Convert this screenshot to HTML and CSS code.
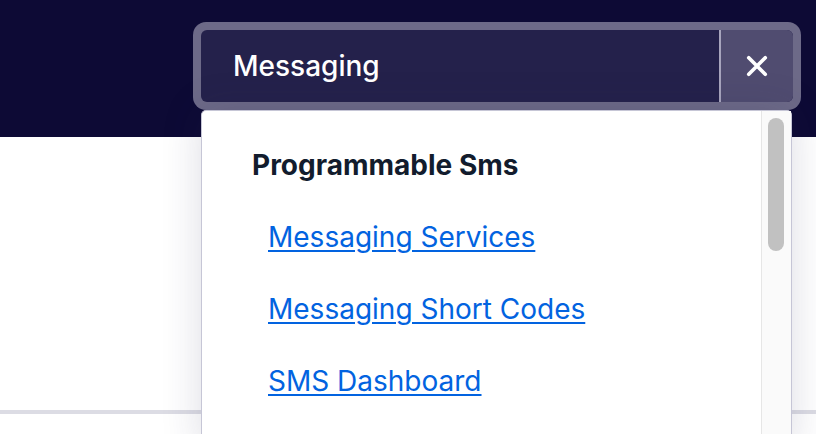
FILE: index.html
```html
<!DOCTYPE html>
<html lang="en">
  <head>
    <meta charset="UTF-8" />
    <meta name="viewport" content="width=device-width, initial-scale=1.0" />
    <title>Search</title>
    <link rel="stylesheet" href="styles.css">
  </head>
  <body>
    <div class="header">
      <div class="search">
        <div class="field">
          <input class="query" type="text" value="Messaging" />
          <button class="clear" aria-label="Clear">
            <svg width="24" height="24" viewBox="0 0 24 24">
              <path d="M3 3 L21 21 M21 3 L3 21" stroke="#fff" stroke-width="4" stroke-linecap="round" fill="none" />
            </svg>
          </button>
        </div>
        <div class="results">
          <div class="list">
            <h3>Programmable Sms</h3>
            <a href="#">Messaging Services</a>
            <a href="#">Messaging Short Codes</a>
            <a href="#">SMS Dashboard</a>
          </div>
          <div class="scrollbar"><div class="thumb"></div></div>
        </div>
      </div>
    </div>
    <div class="content"></div>
    <div class="footer"></div>
  </body>
</html>
```

FILE: styles.css
```css
* {
  margin: 0;
  padding: 0;
  box-sizing: border-box;
}
html,
body {
  width: 100%;
  height: 100%;
  background: #fff;
  font-family: Inter, "Noto Sans", sans-serif;
  overflow: hidden;
}
.header {
  height: 137px;
  background: #0d0a35;
  display: flex;
  justify-content: flex-end;
  padding: 22px 15px 0 0;
}
.search {
  position: relative;
  width: 608px;
  height: 88px;
  padding: 8px;
  border-radius: 13px;
  background: #6d6a88;
}
.field {
  display: flex;
  height: 72px;
  border-radius: 6px;
  overflow: hidden;
  background: #24214b;
}
.query {
  flex: 1;
  min-width: 0;
  border: none;
  outline: none;
  background: transparent;
  color: #fff;
  font-family: inherit;
  font-size: 28px;
  font-weight: 500;
  padding-left: 32px;
}
.clear {
  width: 74px;
  border: none;
  border-left: 2px solid #a8a5bd;
  background: #504c70;
  display: flex;
  align-items: center;
  justify-content: center;
}
.clear svg {
  width: 22px;
  height: 22px;
}
.results {
  position: absolute;
  left: 8px;
  top: 88px;
  width: 591px;
  height: 340px;
  display: flex;
  background: #fff;
  border: 1px solid #c6c6d6;
  border-bottom: none;
  border-radius: 5px 5px 0 0;
  box-shadow: 0 0 40px rgba(40, 40, 80, 0.16);
}
.list {
  flex: 1;
  padding: 37px 0 0 50px;
  display: flex;
  flex-direction: column;
  align-items: flex-start;
}
.list h3 {
  color: #121c2d;
  font-size: 28px;
  line-height: 34px;
  font-weight: 700;
  margin-bottom: 38px;
}
.list a {
  color: #0263e0;
  font-size: 28px;
  line-height: 34px;
  margin-left: 16px;
  margin-bottom: 38px;
  text-underline-offset: 3px;
  text-decoration-thickness: 2px;
}
.scrollbar {
  width: 30px;
  background: #fafafa;
  border-left: 1px solid #e6e6e6;
  padding: 7px 0 0 6px;
}
.thumb {
  width: 16px;
  height: 133px;
  border-radius: 8px;
  background: #c1c1c1;
}
.content {
  height: 273px;
  background: #fff;
}
.footer {
  height: 4px;
  background: #dcdce4;
}
```
